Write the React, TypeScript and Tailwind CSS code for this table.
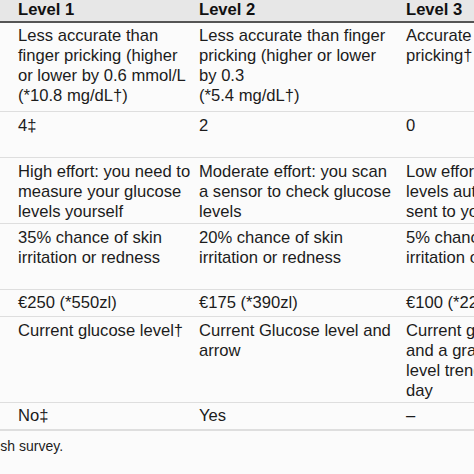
import React from "react";

type Row = { label: string; h: string; pt: string; cells: React.ReactNode[] };

const rows: Row[] = [
  {
    label: "Accuracy",
    h: "h-[89px]",
    pt: "pt-[3px]",
    cells: [
      <>Less accurate than<br />finger pricking (higher<br />or lower by 0.6 mmol/L<br />(*10.8 mg/dL†)</>,
      <>Less accurate than finger<br />pricking (higher or lower<br />by 0.3<br />(*5.4 mg/dL†)</>,
      <>Accurate as finger<br />pricking†</>,
    ],
  },
  {
    label: "Finger pricks per day",
    h: "h-[46px]",
    pt: "pt-[4px]",
    cells: ["4‡", "2", "0"],
  },
  {
    label: "Effort",
    h: "h-[66px]",
    pt: "pt-[4px]",
    cells: [
      <>High effort: you need to<br />measure your glucose<br />levels yourself</>,
      <>Moderate effort: you scan<br />a sensor to check glucose<br />levels</>,
      <>Low effort: your glucose<br />levels automatically read,<br />sent to your phone</>,
    ],
  },
  {
    label: "Skin irritation",
    h: "h-[66px]",
    pt: "pt-[4px]",
    cells: [
      <>35% chance of skin<br />irritation or redness</>,
      <>20% chance of skin<br />irritation or redness</>,
      <>5% chance of skin<br />irritation or redness</>,
    ],
  },
  {
    label: "Cost per month",
    h: "h-[27px]",
    pt: "pt-[3px]",
    cells: ["€250 (*550zl)", "€175 (*390zl)", "€100 (*220zl)"],
  },
  {
    label: "Information displayed",
    h: "h-[86px]",
    pt: "pt-[4px]",
    cells: [
      <>Current glucose level†</>,
      <>Current Glucose level and<br />arrow</>,
      <>Current glucose level,<br />and a graph of glucose<br />level trends over the<br />day</>,
    ],
  },
  {
    label: "Alarms",
    h: "h-[28px]",
    pt: "pt-[3px]",
    cells: ["No‡", "Yes", "–"],
  },
];

const widths = ["w-[182px] pl-[8px]", "w-[206px] pl-[7px]", "w-[210px] pl-[8px]"];

export default function App() {
  return (
    <div
      className="w-[474px] h-[474px] overflow-hidden bg-[#fbfbfb] text-[#1c1c1c]"
      style={{ fontFamily: '"Liberation Sans", Arial, Helvetica, sans-serif' }}
    >
      <div className="ml-[-150px] w-[760px]">
        <div className="flex h-[23px] bg-[#e7e7e7] border-b-2 border-[#555555] text-[16.6px] leading-[20px] font-bold text-[#111111]">
          <div className="w-[160px] shrink-0 pr-[16px] overflow-hidden whitespace-nowrap">Characteristic</div>
          {["Level 1", "Level 2", "Level 3"].map((t, i) => (
            <div key={t} className={`${widths[i]} shrink-0`}>
              {t}
            </div>
          ))}
        </div>
        {rows.map((r, ri) => (
          <div
            key={r.label}
            className={`flex ${r.h} ${ri === rows.length - 1 ? "border-b-2" : "border-b"} border-[#dedede] text-[16.6px] leading-[20px]`}
          >
            <div className={`w-[160px] shrink-0 pr-[16px] overflow-hidden ${r.pt}`}>{r.label}</div>
            {r.cells.map((c, i) => (
              <div key={i} className={`${widths[i]} shrink-0 whitespace-nowrap ${r.pt}`}>
                {c}
              </div>
            ))}
          </div>
        ))}
      </div>
      <p className="ml-[-23px] mt-[5px] text-[14px] leading-[20px] whitespace-nowrap">
        Polish survey.
      </p>
    </div>
  );
}
